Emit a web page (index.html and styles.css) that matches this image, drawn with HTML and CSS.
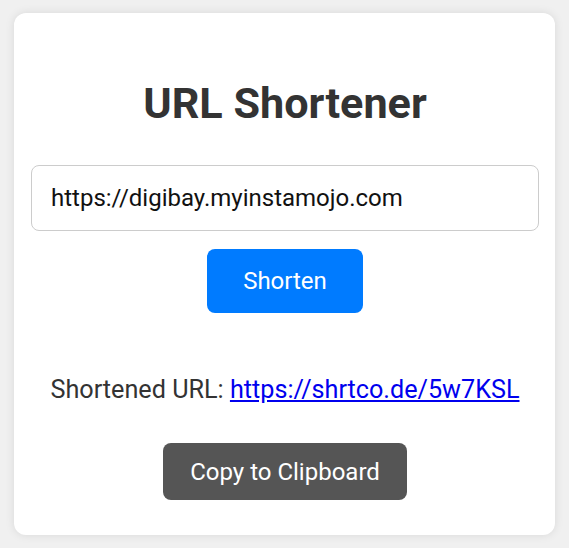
FILE: index.html
```html
<!DOCTYPE html>
<html>
<head>
<meta charset="utf-8">
<link rel="stylesheet" href="styles.css">
</head>
<body>
<div class="card">
  <h1 class="title">URL Shortener</h1>
  <input class="url-input" type="text" value="https://digibay.myinstamojo.com">
  <button class="btn btn-primary">Shorten</button>
  <p class="result">Shortened URL: <a href="#" class="result-link">https://shrtco.de/5w7KSL</a></p>
  <button class="btn btn-copy">Copy to Clipboard</button>
</div>
</body>
</html>
```
FILE: styles.css
```css
html, body {
  margin: 0;
  padding: 0;
}
body {
  background: #f0f0f0;
  font-family: Roboto, "Liberation Sans", sans-serif;
  color: #333;
  padding: 13px 14px;
  height: 548px;
  box-sizing: border-box;
}
.card {
  background: #fff;
  border-radius: 12px;
  box-shadow: 0 0 10px rgba(0,0,0,0.1);
  padding: 0 16px 0 17px;
  height: 522px;
  box-sizing: border-box;
  display: flex;
  flex-direction: column;
  align-items: center;
}
.title {
  font-size: 43.2px;
  font-weight: 700;
  margin: 0;
  padding-top: 66px;
  line-height: 50px;
}
.url-input {
  margin-top: 36px;
  width: 100%;
  height: 66px;
  box-sizing: border-box;
  border: 1px solid #ccc;
  border-radius: 8px;
  padding: 0 19px;
  font-family: inherit;
  font-size: 24px;
  color: #111;
  outline: none;
}
.btn {
  border: none;
  border-radius: 8px;
  color: #fff;
  font-family: inherit;
  font-size: 24px;
  cursor: pointer;
}
.btn-primary {
  margin-top: 18px;
  background: #007bff;
  width: 156px;
  height: 64px;
}
.result {
  font-size: 25.2px;
  margin: 62px 0 0;
  line-height: 30px;
}
.result-link {
  color: #0000ee;
}
.btn-copy {
  margin-top: 38px;
  background: #555;
  width: 244px;
  height: 57px;
}
```
